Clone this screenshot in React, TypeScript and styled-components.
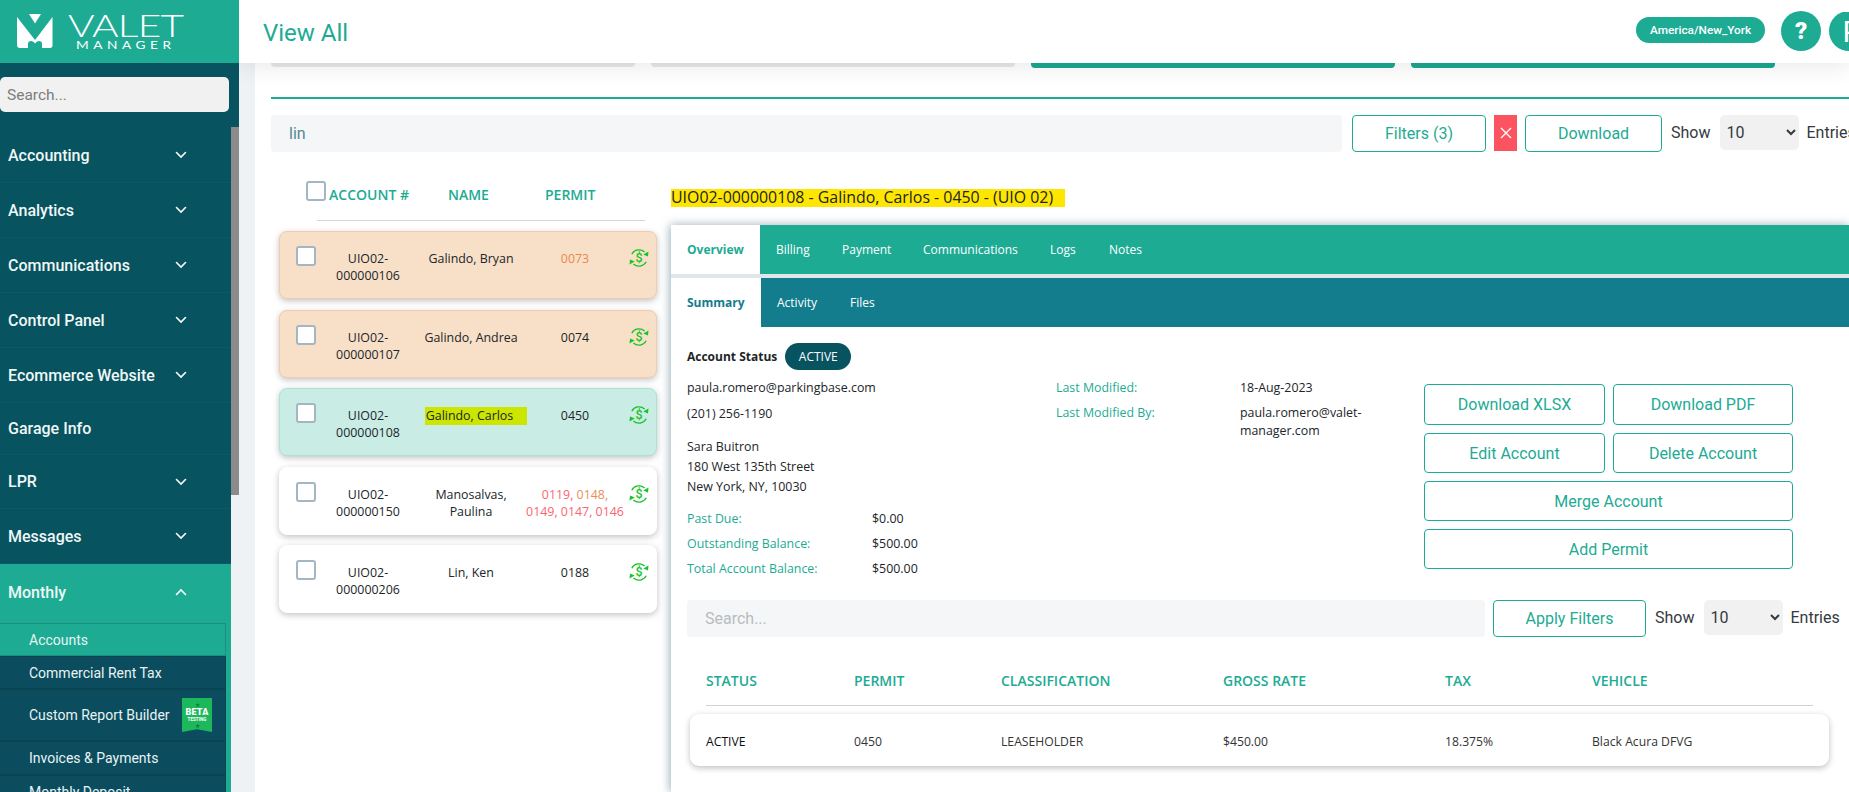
import React from "react";
import styled, { createGlobalStyle } from "styled-components";

const TEAL = "#1dab94";
const DARK = "#07535f";
const BODY = '"Open Sans", "Noto Sans", sans-serif';
const ROBOTO = 'Roboto, "Liberation Sans", sans-serif';

const Global = createGlobalStyle`
  html, body { margin: 0; padding: 0; height: 100%; overflow: hidden; background: #fff; }
  * { box-sizing: border-box; }
`;

const Shell = styled.div`
  display: flex; width: 1849px; height: 792px; overflow: hidden; font-family: ${BODY}; color: #212529;
`;
const Aside = styled.aside`
  width: 239px; flex: none; display: flex; flex-direction: column; background: #eff2f5; position: relative; z-index: 3;
`;
const Brand = styled.div`
  height: 63px; background: ${TEAL}; display: flex; align-items: flex-start; padding: 14px 0 0 17px; gap: 15px;
`;
const BrandWords = styled.div`
  display: flex; flex-direction: column; align-items: flex-start; color: #fff; width: 116px;
`;
const BrandTop = styled.span`
  font: 300 30.5px/22px "Lato", sans-serif; letter-spacing: -0.5px; height: 22px; display: inline-block; transform: scaleX(1.33); transform-origin: left center;
`;
const BrandBottom = styled.span`
  font: 400 10.5px/10px "Lato", sans-serif; letter-spacing: 3.5px; margin: 4px 0 0 8px; display: inline-block; transform: scaleX(1.3); transform-origin: left center;
`;
const SearchWrap = styled.div`
  background: ${DARK}; height: 64px; padding: 14px 10px 0 0;
`;
const SideSearch = styled.input`
  width: 229px; height: 35px; border: 0; outline: 0; border-radius: 5px; background: #f1f1f1; padding: 0 7px;
  font: 400 15.5px ${ROBOTO}; color: #555;
  &::placeholder { color: #7d7d7d; opacity: 1; }
`;
const NavRow = styled.div`
  display: flex; flex: 1; min-height: 0;
`;
const Nav = styled.nav`
  width: 231px; flex: none; background: ${DARK}; overflow: hidden; display: flex; flex-direction: column; padding-top: 1px;
`;
const Track = styled.div`
  width: 8px; flex: none;
`;
const Thumb = styled.div`
  height: 368px; background: #8b8b8b;
`;
const NavItem = styled.div<{ $open?: boolean; $h?: number }>`
  height: ${(p) => p.$h ?? 55}px; flex: none; display: flex; align-items: center; justify-content: space-between;
  padding: 0 44px ${(p) => (p.$open ? 2 : 0)}px 8px; font: 500 16px ${ROBOTO}; color: #f0f7f7;
  background: ${(p) => (p.$open ? TEAL : "transparent")};
  border-bottom: 1px solid ${(p) => (p.$open ? "transparent" : "#0a5a66")};
`;
const SubList = styled.div`
  background: ${TEAL}; padding-right: 5px; display: flex; flex-direction: column; flex: 1;
`;
const SubItem = styled.div<{ $active?: boolean; $h: number }>`
  height: ${(p) => p.$h}px; flex: none; display: flex; align-items: center; justify-content: space-between;
  padding: 0 13px 0 29px; font: 400 14px ${ROBOTO}; color: #e9f3f3;
  background: ${(p) => (p.$active ? TEAL : "#0b4d5f")};
  border: 1px solid ${(p) => (p.$active ? "#17907f" : "#0a4453")};
  border-left: 0;
`;
const Beta = styled.div`
  width: 30px; height: 34px; background: #1cb85b; color: #fff; display: flex; flex-direction: column; align-items: center; justify-content: center;
  clip-path: polygon(0 0, 100% 0, 100% 100%, 50% 92%, 0 100%); flex: none;
`;
const BetaStar = styled.span`
  font: 400 6px/6px ${ROBOTO}; color: #0c7d3a;
`;
const BetaTop = styled.span`
  font: 900 9px/9px ${ROBOTO}; letter-spacing: .2px;
`;
const BetaBottom = styled.span`
  font: 700 4.6px/6px ${ROBOTO};
`;
const Right = styled.div`
  flex: 1; min-width: 0; display: flex; flex-direction: column;
`;
const Header = styled.header`
  height: 63px; flex: none; background: #fff; display: flex; align-items: center; padding-left: 24px;
  position: relative; z-index: 2; box-shadow: 0 4px 22px rgba(0,0,0,.09);
`;
const PageTitle = styled.h1`
  margin: 2px 0 0; font: 400 24px ${ROBOTO}; color: ${TEAL}; flex: 1;
`;
const Zone = styled.div`
  width: 129px; height: 26px; margin: -4px 16px 0 0; border-radius: 13px; background: ${TEAL}; color: #fff;
  font: 500 11.8px/26px ${ROBOTO}; text-align: center; flex: none;
`;
const Round = styled.div`
  width: 40px; height: 40px; border-radius: 50%; background: ${TEAL}; color: #fff; flex: none; margin-right: 8px; margin-top: -1px;
  display: flex; align-items: center; justify-content: center; font: 900 24px ${ROBOTO};
`;
const Avatar = styled(Round)`
  font: 400 30px ${ROBOTO}; padding-left: 6px; margin-right: 0;
`;
const Cut = styled.div`
  width: 20px; flex: none; overflow: hidden;
`;
const Workspace = styled.div`
  flex: 1; min-height: 0; background: #eff2f5; padding-left: 16px; display: flex;
`;
const Content = styled.main`
  flex: 1; min-width: 0; background: #fff; padding-left: 16px; display: flex; flex-direction: column;
`;
const TopCards = styled.div`
  display: flex; gap: 16px; height: 5px; flex: none;
`;
const TopCard = styled.div<{ $on?: boolean }>`
  width: 364px; height: ${(p) => (p.$on ? 5 : 4)}px; border-radius: 0 0 4px 4px; background: ${(p) => (p.$on ? "#1ca78f" : "#e7e7e7")};
`;
const Rule = styled.div`
  height: 2px; background: ${TEAL}; margin-top: 29px; flex: none;
`;
const FilterRow = styled.div`
  display: flex; align-items: flex-start; margin-top: 16px; height: 37px; flex: none;
`;
const Field = styled.input<{ $w: number }>`
  width: ${(p) => p.$w}px; height: 37px; flex: none; border: 0; outline: 0; background: #f5f6f8; border-radius: 4px; padding: 0 18px;
  font: 400 16px ${ROBOTO}; color: #4f8a93;
  &::placeholder { color: #b9bcc0; opacity: 1; }
`;
const Btn = styled.button<{ $w?: number; $h?: number; $ml?: number }>`
  width: ${(p) => (p.$w ? `${p.$w}px` : "auto")}; height: ${(p) => p.$h ?? 37}px; margin-left: ${(p) => p.$ml ?? 0}px; flex: none; background: #fff; border: 1.5px solid ${TEAL}; border-radius: 4px;
  color: ${TEAL}; font: 400 16px ${ROBOTO}; padding: 0; cursor: pointer;
`;
const Clear = styled.div`
  width: 23px; height: 36px; flex: none; margin: 0 8px; background: #fb5460; color: #fff; display: flex; align-items: center; justify-content: center;
`;
const Lbl = styled.span<{ $ml: number; $mr: number }>`
  font: 400 16px/35px ${ROBOTO}; color: #343a40; margin: 0 ${(p) => p.$mr}px 0 ${(p) => p.$ml}px; flex: none;
`;
const Picker = styled.select`
  width: 79px; height: 35px; flex: none; border: 0; outline: 0; background: #f1f1f1; border-radius: 5px; padding-left: 2px;
  font: 400 16px ${ROBOTO}; color: #343a40;
`;
const Split = styled.div`
  display: flex; flex: 1; min-height: 0;
`;
const ListCol = styled.section`
  width: 400px; flex: none;
`;
const ListHead = styled.div`
  display: grid; grid-template-columns: 20px 119px 97px auto; column-gap: 0; margin: 29px 0 0 35px; height: 39px; align-items: start;
`;
const Check = styled.span`
  display: block; width: 20px; height: 20px; border: 2px solid #a3b6c2; border-radius: 3px; background: #fff;
`;
const HeadCell = styled.span`
  font: 600 14px/20px ${BODY}; color: ${TEAL}; padding: 4px 0 0 3px; white-space: nowrap;
`;
const ListRule = styled.div`
  height: 1px; background: #ccd8dc; margin-left: 46px; width: 328px;
`;
const Cards = styled.div`
  margin: 10px 0 0 8px; width: 378px; display: flex; flex-direction: column; gap: 10.5px;
`;
const Card = styled.article<{ $tone: string }>`
  height: 68px; flex: none; border-radius: 8px; padding: 14px 5px 0 16px;
  display: grid; grid-template-columns: 21px 102px 104px 104px 26px; align-items: start;
  font: 400 12.4px/17px ${BODY}; text-align: center;
  background: ${(p) => (p.$tone === "peach" ? "#f8e0c8" : p.$tone === "green" ? "#c9ece5" : "#fff")};
  border: 1px solid ${(p) => (p.$tone === "peach" ? "#f3cba8" : p.$tone === "green" ? "#abe2d7" : "#fff")};
  box-shadow: 0 2px 6px rgba(0,0,0,.24);
`;
const Cell = styled.div`
  padding-top: 4px;
`;
const Mark = styled.mark`
  background: #cde600; color: inherit; padding: 0 14px 1px 1px; display: inline-block; margin-right: -10px;
`;
const Permit = styled.span<{ $c?: string }>`
  color: ${(p) => p.$c ?? "#212529"};
`;
const IconCell = styled.div`
  display: flex; justify-content: center; padding: 2px 2px 0 0;
`;
const DetailCol = styled.section`
  flex: 1; min-width: 0; display: flex; flex-direction: column;
`;
const TitleBar = styled.div`
  margin-top: 37px; height: 18px; flex: none; width: 394px; background: #ffe600; font: 400 15.9px/16px ${BODY}; white-space: nowrap;
`;
const Panel = styled.div`
  margin-top: 18px; flex: 1; min-height: 0; background: #fff; box-shadow: -1px 0 9px rgba(70,110,130,.55);
`;
const TabBar = styled.div<{ $bg: string }>`
  height: 49px; background: ${(p) => p.$bg}; display: flex;
`;
const TabGap = styled.div`
  height: 4px; background: #dfe7ea;
`;
const Tab = styled.div<{ $active?: boolean; $w: number; $c?: string }>`
  width: ${(p) => p.$w}px; flex: none; padding-left: ${(p) => (p.$active ? 16 : 0)}px; display: flex; align-items: center;
  background: ${(p) => (p.$active ? "#fff" : "transparent")};
  color: ${(p) => (p.$active ? p.$c : "#fff")};
  font: ${(p) => (p.$active ? 700 : 400)} 12px ${BODY};
`;
const Summary = styled.div`
  padding: 16px 0 0 16px;
`;
const StatusRow = styled.div`
  display: flex; align-items: center; height: 27px; font: 700 12px ${BODY}; color: #1e2528;
`;
const Badge = styled.span`
  margin-left: 8px; width: 66px; height: 27px; border-radius: 14px; background: ${DARK}; color: #fff; font: 400 12px/27px ${BODY}; text-align: center;
`;
const InfoGrid = styled.div`
  display: grid; grid-template-columns: 369px 368px 369px; margin-top: 8px;
`;
const Line = styled.div`
  font: 400 12.4px/20px ${BODY}; margin-bottom: 6px;
`;
const Address = styled.div`
  font: 400 12.4px/20px ${BODY}; margin: 13px 0 12px;
`;
const KV = styled.div`
  display: grid; grid-template-columns: 185px 1fr; font: 400 12.4px/20px ${BODY}; margin-bottom: 5px;
`;
const ModKV = styled.div`
  display: grid; grid-template-columns: 184px 170px; font: 400 12.4px/18px ${BODY}; margin-bottom: 6px; padding-top: 1px;
`;
const Key = styled.span`
  color: ${TEAL};
`;
const Actions = styled.div`
  display: grid; grid-template-columns: 181px 180px; gap: 8px; margin-top: 6px; align-content: start;
`;
const Wide = styled(Btn)`
  grid-column: 1 / 3;
`;
const TableTools = styled.div`
  display: flex; align-items: flex-start; margin-top: 16px; height: 37px;
`;
const Table = styled.div`
  margin-top: 35px;
`;
const TableHead = styled.div`
  margin-left: 19px; width: 1107px; height: 34px; border-bottom: 1px solid #ccd4d8;
  display: grid; grid-template-columns: 148px 147px 222px 222px 147px 1fr; font: 600 14px/18px ${BODY}; color: ${TEAL};
`;
const TableRow = styled.div`
  margin: 8px 0 0 3px; width: 1139px; height: 52px; border-radius: 9px; background: #fff; box-shadow: 0 2px 6px rgba(0,0,0,.25);
  padding: 3px 0 0 16px; display: grid; grid-template-columns: 148px 147px 222px 222px 147px 1fr; align-items: center; font: 400 12.2px ${BODY}; color: #333;
`;
const Strong = styled.span`
  color: #0c0c12;
`;

const Chevron = ({ up }: { up?: boolean }) => (
  <svg width="12" height="8" viewBox="0 0 12 8" fill="none" stroke="#fff" strokeWidth="1.6" strokeLinecap="round">
    <path d={up ? "M1.5 6.5 6 2l4.5 4.5" : "M1.5 1.5 6 6l4.5-4.5"} />
  </svg>
);

const LogoMark = () => (
  <svg width="36" height="35" viewBox="0 0 36 35" fill="#fff">
    <path d="M12 0H24L18 9.5Z" />
    <path d="M0 3 18 26 35.500 3V31Q35.500 34 33 34H25V30Q25 27 22 27Q19 27 18 29.500Q17 27 14 27Q11 27 11 30V34H3Q0 34 0 31Z" />
  </svg>
);

const SyncDollar = () => (
  <svg width="20" height="20" viewBox="0 0 20 20" fill="none" stroke="#17c427" strokeWidth="1.3">
    <path d="M2.800 6.200A8.200 8.200 0 0 1 15.600 4" />
    <path d="M17.200 13.800A8.200 8.200 0 0 1 4.400 16" />
    <path d="M19.500 3.500 19 8.600 14.300 6.500Z" fill="#17c427" stroke="none" />
    <path d="M.5 16.500 1 11.400 5.700 13.500Z" fill="#17c427" stroke="none" />
    <text x="10" y="14.300" textAnchor="middle" fontSize="12.500" fontWeight="500" fill="#17c427" stroke="none" fontFamily="Roboto, sans-serif">$</text>
  </svg>
);

const navTop = ["Accounting", "Analytics", "Communications", "Control Panel", "Ecommerce Website"];

const people = [
  { tone: "peach", id: "000000106", name: "Galindo, Bryan", permits: [["0073", "#e8894f"]] },
  { tone: "peach", id: "000000107", name: "Galindo, Andrea", permits: [["0074"]] },
  { tone: "green", id: "000000108", name: "Galindo, Carlos", permits: [["0450"]], mark: true },
  { tone: "white", id: "000000150", name: "Manosalvas, Paulina", permits: [["0119", "#fb6470"], ["0148", "#ea8f58"], ["0149", "#fb6470"], ["0147", "#fb6470"], ["0146", "#fb6470"]] },
  { tone: "white", id: "000000206", name: "Lin, Ken", permits: [["0188"]] },
];

export default function App() {
  return (
    <Shell>
      <Global />
      <Aside>
        <Brand>
          <LogoMark />
          <BrandWords>
            <BrandTop>VALET</BrandTop>
            <BrandBottom>MANAGER</BrandBottom>
          </BrandWords>
        </Brand>
        <SearchWrap>
          <SideSearch placeholder="Search..." />
        </SearchWrap>
        <NavRow>
          <Nav>
            {navTop.map((n) => (
              <NavItem key={n}>{n}<Chevron /></NavItem>
            ))}
            <NavItem $h={52}>Garage Info</NavItem>
            <NavItem $h={54}>LPR<Chevron /></NavItem>
            <NavItem>Messages<Chevron /></NavItem>
            <NavItem $open $h={59}>Monthly<Chevron up /></NavItem>
            <SubList>
              <SubItem $active $h={33}>Accounts</SubItem>
              <SubItem $h={33}>Commercial Rent Tax</SubItem>
              <SubItem $h={52}>
                Custom Report Builder
                <Beta>
                  <BetaStar>★</BetaStar>
                  <BetaTop>BETA</BetaTop>
                  <BetaBottom>TESTING</BetaBottom>
                  <BetaStar>★</BetaStar>
                </Beta>
              </SubItem>
              <SubItem $h={34}>Invoices &amp; Payments</SubItem>
              <SubItem $h={34}>Monthly Deposit</SubItem>
            </SubList>
          </Nav>
          <Track><Thumb /></Track>
        </NavRow>
      </Aside>
      <Right>
        <Header>
          <PageTitle>View All</PageTitle>
          <Zone>America/New_York</Zone>
          <Round>?</Round>
          <Cut><Avatar>P</Avatar></Cut>
        </Header>
        <Workspace>
          <Content>
            <TopCards>
              <TopCard /><TopCard /><TopCard $on /><TopCard $on />
            </TopCards>
            <Rule />
            <FilterRow>
              <Field $w={1071} value="lin" readOnly />
              <Btn $w={134} $ml={10}>Filters (3)</Btn>
              <Clear>
                <svg width="12" height="12" viewBox="0 0 12 12" stroke="#fff" strokeWidth="1.400"><path d="M1 1l10 10M11 1 1 11" /></svg>
              </Clear>
              <Btn $w={137}>Download</Btn>
              <Lbl $ml={9} $mr={10}>Show</Lbl>
              <Picker defaultValue="10"><option>10</option></Picker>
              <Lbl $ml={7} $mr={0}>Entries</Lbl>
            </FilterRow>
            <Split>
              <ListCol>
                <ListHead>
                  <Check />
                  <HeadCell>ACCOUNT #</HeadCell>
                  <HeadCell>NAME</HeadCell>
                  <HeadCell>PERMIT</HeadCell>
                </ListHead>
                <ListRule />
                <Cards>
                  {people.map((p) => (
                    <Card key={p.id} $tone={p.tone}>
                      <Check />
                      <Cell>UIO02-<br />{p.id}</Cell>
                      <Cell>{p.mark ? <Mark>{p.name}</Mark> : p.name}</Cell>
                      <Cell>
                        {p.permits.map(([t, c], i) => (
                          <React.Fragment key={t}>
                            <Permit $c={c}>{t}{i < p.permits.length - 1 ? ", " : ""}</Permit>
                            {i === 1 && <br />}
                          </React.Fragment>
                        ))}
                      </Cell>
                      <IconCell><SyncDollar /></IconCell>
                    </Card>
                  ))}
                </Cards>
              </ListCol>
              <DetailCol>
                <TitleBar>UIO02-000000108 - Galindo, Carlos - 0450 - (UIO 02)</TitleBar>
                <Panel>
                  <TabBar $bg={TEAL}>
                    <Tab $active $w={89} $c={TEAL}>Overview</Tab>
                    <Tab $w={16} />
                    <Tab $w={66}>Billing</Tab>
                    <Tab $w={81}>Payment</Tab>
                    <Tab $w={127}>Communications</Tab>
                    <Tab $w={59}>Logs</Tab>
                    <Tab $w={60}>Notes</Tab>
                  </TabBar>
                  <TabGap />
                  <TabBar $bg="#137d8e">
                    <Tab $active $w={90} $c="#137d8e">Summary</Tab>
                    <Tab $w={16} />
                    <Tab $w={73}>Activity</Tab>
                    <Tab $w={60}>Files</Tab>
                  </TabBar>
                  <Summary>
                    <StatusRow>Account Status<Badge>ACTIVE</Badge></StatusRow>
                    <InfoGrid>
                      <div>
                        <Line>paula.romero@parkingbase.com</Line>
                        <Line>(201) 256-1190</Line>
                        <Address>Sara Buitron<br />180 West 135th Street<br />New York, NY, 10030</Address>
                        <KV><Key>Past Due:</Key><span>$0.00</span></KV>
                        <KV><Key>Outstanding Balance:</Key><span>$500.00</span></KV>
                        <KV><Key>Total Account Balance:</Key><span>$500.00</span></KV>
                      </div>
                      <div>
                        <ModKV><Key>Last Modified:</Key><span>18-Aug-2023</span></ModKV>
                        <ModKV><Key>Last Modified By:</Key><span>paula.romero@valet-manager.com</span></ModKV>
                      </div>
                      <Actions>
                        <Btn $h={41}>Download XLSX</Btn>
                        <Btn $h={41}>Download PDF</Btn>
                        <Btn $h={40}>Edit Account</Btn>
                        <Btn $h={40}>Delete Account</Btn>
                        <Wide $h={40}>Merge Account</Wide>
                        <Wide $h={40}>Add Permit</Wide>
                      </Actions>
                    </InfoGrid>
                    <TableTools>
                      <Field $w={798} placeholder="Search..." />
                      <Btn $w={153} $ml={8}>Apply Filters</Btn>
                      <Lbl $ml={9} $mr={10}>Show</Lbl>
                      <Picker defaultValue="10"><option>10</option></Picker>
                      <Lbl $ml={7} $mr={0}>Entries</Lbl>
                    </TableTools>
                    <Table>
                      <TableHead>
                        <span>STATUS</span><span>PERMIT</span><span>CLASSIFICATION</span><span>GROSS RATE</span><span>TAX</span><span>VEHICLE</span>
                      </TableHead>
                      <TableRow>
                        <Strong>ACTIVE</Strong><span>0450</span><span>LEASEHOLDER</span><span>$450.00</span><span>18.375%</span><span>Black Acura DFVG</span>
                      </TableRow>
                    </Table>
                  </Summary>
                </Panel>
              </DetailCol>
            </Split>
          </Content>
        </Workspace>
      </Right>
    </Shell>
  );
}
